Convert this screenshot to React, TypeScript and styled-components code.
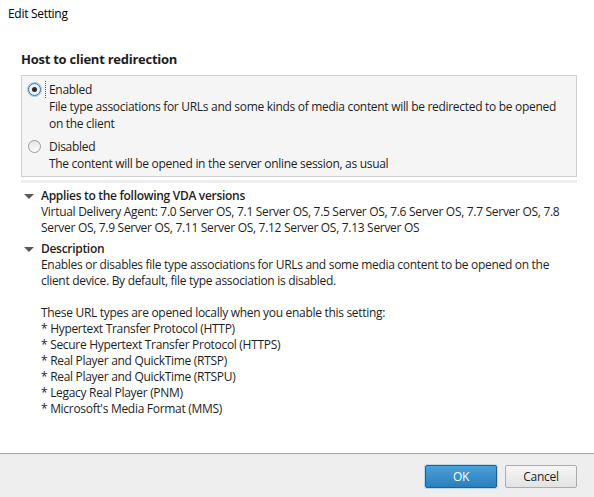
import React from 'react';
import styled, { createGlobalStyle } from 'styled-components';

const GlobalStyle = createGlobalStyle`
  html, body {
    margin: 0;
    padding: 0;
    background: #fff;
  }

  body {
    font-family: "Open Sans", "Liberation Sans", sans-serif;
    font-size: 12px;
    letter-spacing: -0.3px;
    color: #1e1e1e;
  }
`;

const Dialog = styled.div`
  width: 594px;
  height: 497px;
  display: flex;
  flex-direction: column;
  background: #fff;
  box-sizing: border-box;
`;

const DialogTitle = styled.div`
  padding: 6px 0 0 8px;
  height: 38px;
  box-sizing: border-box;
  line-height: 16px;
  color: #000;
`;

const Body = styled.div`
  flex: 1;
  min-height: 0;
  overflow: hidden;
  padding: 12px 17px 0 21px;
`;

const SettingName = styled.h2`
  margin: 0 0 7px;
  font-size: 13px;
  font-weight: 700;
  line-height: 18px;
  letter-spacing: -0.25px;
  color: #1e1e1e;
`;

const OptionsBox = styled.div`
  background: #f5f5f5;
  border: 1px solid #cfcfcf;
  padding: 5px 0 4px 5px;
  display: flex;
  flex-direction: column;
  gap: 6px;
`;

const Option = styled.label`
  display: grid;
  grid-template-columns: 22px 1fr;
  align-items: start;
`;

const Radio = styled.span<{ $checked?: boolean }>`
  width: 13px;
  height: 13px;
  margin: 2px 0 0 1px;
  border-radius: 50%;
  box-sizing: border-box;
  display: flex;
  align-items: center;
  justify-content: center;
  border: 1px solid ${p => (p.$checked ? '#2f78b7' : '#9a9a9a')};
  background: ${p =>
    p.$checked
      ? 'radial-gradient(circle, #f4f9fd 0%, #dbe9f5 100%)'
      : 'linear-gradient(#e6e6e6, #fbfbfb)'};
  box-shadow: ${p => (p.$checked ? '0 0 0 1px #a9cbe8' : 'none')};

  &::after {
    content: '';
    display: ${p => (p.$checked ? 'block' : 'none')};
    width: 5px;
    height: 5px;
    border-radius: 50%;
    background: #2b2b2b;
  }
`;

const OptionText = styled.div`
  line-height: 17px;
  white-space: nowrap;
`;

const OptionLabel = styled.span<{ $focused?: boolean }>`
  display: inline-block;
  padding-left: 3px;
  margin-left: -4px;
  border-left: 1px dotted ${p => (p.$focused ? '#555' : 'transparent')};
`;

const OptionHint = styled.div`
  color: #1e1e1e;
`;

const Separator = styled.div`
  height: 3px;
  margin: 3px 0 5px;
  background: #efefef;
`;

const Section = styled.section`
  margin-bottom: 5px;
`;

const SectionHead = styled.div`
  display: flex;
  align-items: center;
  gap: 7px;
  padding-left: 3px;
  font-weight: 600;
  line-height: 16px;
  color: #1e1e1e;
`;

const Arrow = styled.span`
  width: 0;
  height: 0;
  border-left: 5px solid transparent;
  border-right: 5px solid transparent;
  border-top: 5px solid #5a5a5a;
`;

const SectionBody = styled.div`
  padding-left: 20px;
  line-height: 16px;
  white-space: pre;
`;

const Footer = styled.footer`
  flex-shrink: 0;
  height: 43px;
  border-top: 1px solid #a0a5ad;
  background: #eeeeee;
  display: flex;
  align-items: center;
  justify-content: flex-end;
  gap: 8px;
  padding: 0 17px 0 0;
`;

const Button = styled.button<{ $primary?: boolean }>`
  width: 72px;
  height: 23px;
  margin-top: 2px;
  font-family: inherit;
  font-size: 12px;
  letter-spacing: inherit;
  border-radius: 2px;
  border: 1px solid ${p => (p.$primary ? '#1f5f94' : '#acacac')};
  color: ${p => (p.$primary ? '#fff' : '#1e1e1e')};
  background: ${p =>
    p.$primary
      ? 'linear-gradient(#4aa0d6, #2a7fbe)'
      : 'linear-gradient(#f6f6f6, #e2e2e2)'};
  box-shadow: ${p => (p.$primary ? '0 0 0 1px #bcd6ea' : 'none')};
  padding: 0;
`;

const versions =
  'Virtual Delivery Agent: 7.0 Server OS, 7.1 Server OS, 7.5 Server OS, 7.6 Server OS, 7.7 Server OS, 7.8\nServer OS, 7.9 Server OS, 7.11 Server OS, 7.12 Server OS, 7.13 Server OS';

const description = [
  'Enables or disables file type associations for URLs and some media content to be opened on the',
  'client device. By default, file type association is disabled.',
  '',
  'These URL types are opened locally when you enable this setting:',
  '* Hypertext Transfer Protocol (HTTP)',
  '* Secure Hypertext Transfer Protocol (HTTPS)',
  '* Real Player and QuickTime (RTSP)',
  '* Real Player and QuickTime (RTSPU)',
  '* Legacy Real Player (PNM)',
  "* Microsoft's Media Format (MMS)",
].join('\n');

export default function App() {
  return (
    <>
      <GlobalStyle />
      <Dialog>
        <DialogTitle>Edit Setting</DialogTitle>
        <Body>
          <SettingName>Host to client redirection</SettingName>
          <OptionsBox>
            <Option>
              <Radio $checked />
              <OptionText>
                <OptionLabel $focused>Enabled</OptionLabel>
                <OptionHint>
                  File type associations for URLs and some kinds of media content will be redirected to be opened
                  <br />
                  on the client
                </OptionHint>
              </OptionText>
            </Option>
            <Option>
              <Radio />
              <OptionText>
                <OptionLabel>Disabled</OptionLabel>
                <OptionHint>The content will be opened in the server online session, as usual</OptionHint>
              </OptionText>
            </Option>
          </OptionsBox>
          <Separator />
          <Section>
            <SectionHead>
              <Arrow />
              Applies to the following VDA versions
            </SectionHead>
            <SectionBody>{versions}</SectionBody>
          </Section>
          <Section>
            <SectionHead>
              <Arrow />
              Description
            </SectionHead>
            <SectionBody>{description}</SectionBody>
          </Section>
        </Body>
        <Footer>
          <Button $primary>OK</Button>
          <Button>Cancel</Button>
        </Footer>
      </Dialog>
    </>
  );
}
